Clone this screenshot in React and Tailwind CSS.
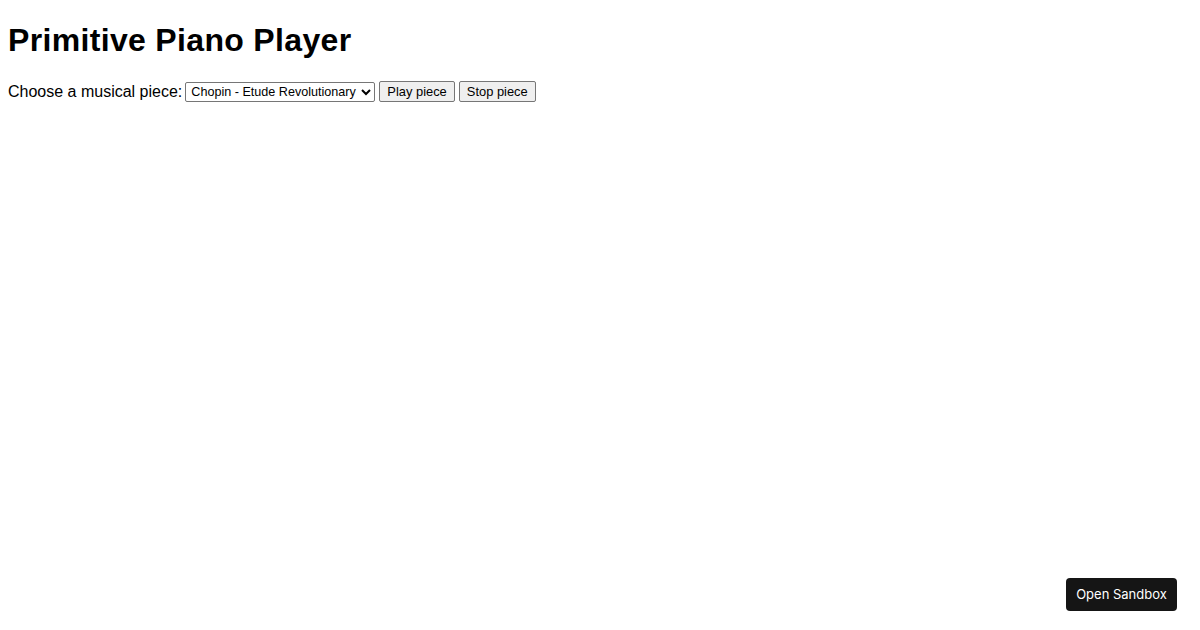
import React from "react";

export default function App() {
  return (
    <div className="min-h-[630px] bg-white text-black font-['Liberation_Sans',Arial,sans-serif] px-2 pt-[22px]">
      <h1 className="text-[32px] font-bold leading-[normal] tracking-[0.33px] mb-[22px]">Primitive Piano Player</h1>
      <div className="flex items-center text-[16px] leading-[normal]">
        <label htmlFor="piece">Choose a musical piece:</label>
        <select
          id="piece"
          className="ml-[3px] h-[20px] w-[190px] border border-[#767676] rounded-[2px] bg-white text-[12.6px] pl-[1px] text-black"
          defaultValue="chopin"
        >
          <option value="chopin">Chopin - Etude Revolutionary</option>
        </select>
        <button className="ml-[4px] h-[21px] px-[7px] pt-[1px] border border-[#767676] rounded-[2px] bg-[#efefef] text-[12.9px] leading-none">
          Play piece
        </button>
        <button className="ml-[4px] h-[21px] px-[7px] pt-[1px] border border-[#767676] rounded-[2px] bg-[#efefef] text-[12.9px] leading-none">
          Stop piece
        </button>
      </div>
      <button className="fixed right-[23px] bottom-[19px] h-[33px] w-[111px] rounded-[4px] bg-[#151515] text-white text-[13px] font-['Inter',sans-serif]">
        Open Sandbox
      </button>
    </div>
  );
}
